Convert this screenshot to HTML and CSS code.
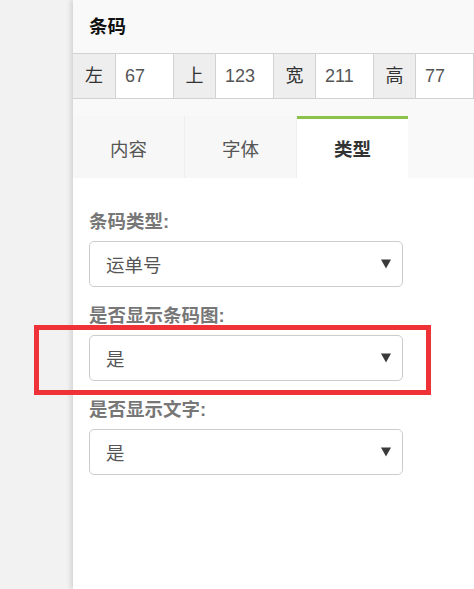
FILE: index.html
```html
<!DOCTYPE html>
<html lang="zh-CN">
<head>
<meta charset="utf-8">
<title>条码</title>
<link rel="stylesheet" href="styles.css">
</head>
<body>
<div class="page">
  <div class="side"></div>
  <div class="panel">
    <div class="header">条码</div>
    <div class="pos-row">
      <div class="pos-label">左</div><div class="pos-input">67</div>
      <div class="pos-label">上</div><div class="pos-input">123</div>
      <div class="pos-label">宽</div><div class="pos-input">211</div>
      <div class="pos-label">高</div><div class="pos-input">77</div>
    </div>
    <div class="tab-bar">
      <div class="tab">内容</div>
      <div class="tab">字体</div>
      <div class="tab active">类型</div>
    </div>
    <div class="content">
      <div class="field-label">条码类型:</div>
      <div class="select"><span>运单号</span><svg class="arrow" width="10" height="10" viewBox="0 0 10 10"><path d="M0 0.5H10L5 9.5Z" fill="#3a3a3a"/></svg></div>
      <div class="field-label">是否显示条码图:</div>
      <div class="select"><span>是</span><svg class="arrow" width="10" height="10" viewBox="0 0 10 10"><path d="M0 0.5H10L5 9.5Z" fill="#3a3a3a"/></svg></div>
      <div class="field-label">是否显示文字:</div>
      <div class="select"><span>是</span><svg class="arrow" width="10" height="10" viewBox="0 0 10 10"><path d="M0 0.5H10L5 9.5Z" fill="#3a3a3a"/></svg></div>
    </div>
  </div>
  <div class="highlight"></div>
</div>
</body>
</html>
```
FILE: styles.css
```css
html, body {
  margin: 0;
  padding: 0;
  height: 100%;
}
body {
  font-family: "Liberation Sans", "Noto Sans CJK SC", sans-serif;
  background: #ffffff;
}
.page {
  position: relative;
  display: flex;
  height: 589px;
  overflow: hidden;
}
.side {
  width: 73px;
  flex: none;
  background: #f2f2f2;
}
.panel {
  flex: 1;
  background: #ffffff;
  box-shadow: -2px 0 5px rgba(0, 0, 0, 0.14);
  display: flex;
  flex-direction: column;
  position: relative;
}
.header {
  height: 53px;
  box-sizing: border-box;
  padding: 2px 0 0 16px;
  line-height: 50px;
  font-size: 18.5px;
  font-weight: bold;
  color: #111;
  background: #f9f9f9;
}
.pos-row {
  display: flex;
  height: 46px;
  box-sizing: border-box;
  border-top: 1px solid #d2d2d2;
  border-bottom: 1px solid #d2d2d2;
  width: 401px;
}
.pos-label {
  width: 42px;
  flex: none;
  box-sizing: border-box;
  background: #eeeeee;
  border-left: 1px solid #d2d2d2;
  text-align: center;
  font-size: 18px;
  line-height: 44px;
  color: #333;
}
.pos-label:first-child {
  border-left: none;
}
.pos-input {
  width: 58px;
  flex: none;
  box-sizing: border-box;
  background: #ffffff;
  border-left: 1px solid #d2d2d2;
  padding-left: 9px;
  font-size: 18px;
  line-height: 44px;
  color: #555;
}
.pos-input:last-child {
  border-right: 1px solid #d2d2d2;
  width: 59px;
}
.tab-bar {
  display: flex;
  background: #f9f9f9;
  padding-top: 17px;
  height: 62px;
}
.tab {
  width: 112px;
  box-sizing: border-box;
  background: #f7f7f7;
  border-right: 1px solid #eeeeee;
  text-align: center;
  font-size: 18.5px;
  padding-top: 6px;
  line-height: 56px;
  color: #555;
}
.tab.active {
  background: #ffffff;
  border-top: 3px solid #8bc34a;
  border-right: none;
  padding-top: 3px;
  font-weight: bold;
  color: #333;
  width: 111px;
}
.content {
  flex: 1;
  background: #ffffff;
  padding: 32px 0 0 16px;
}
.field-label {
  font-size: 18.5px;
  font-weight: bold;
  line-height: 24px;
  color: #777;
  margin-bottom: 7px;
}
.select {
  width: 314px;
  height: 46px;
  box-sizing: border-box;
  border: 1px solid #cccccc;
  border-radius: 5px;
  display: flex;
  align-items: center;
  justify-content: space-between;
  padding: 0 11px 0 16px;
  font-size: 18.5px;
  color: #555;
  margin-bottom: 17px;
}
.arrow {
  display: block;
}
.highlight {
  position: absolute;
  left: 34px;
  top: 325px;
  width: 397px;
  height: 70px;
  box-sizing: border-box;
  border: 5px solid #ee3237;
  pointer-events: none;
}
```
